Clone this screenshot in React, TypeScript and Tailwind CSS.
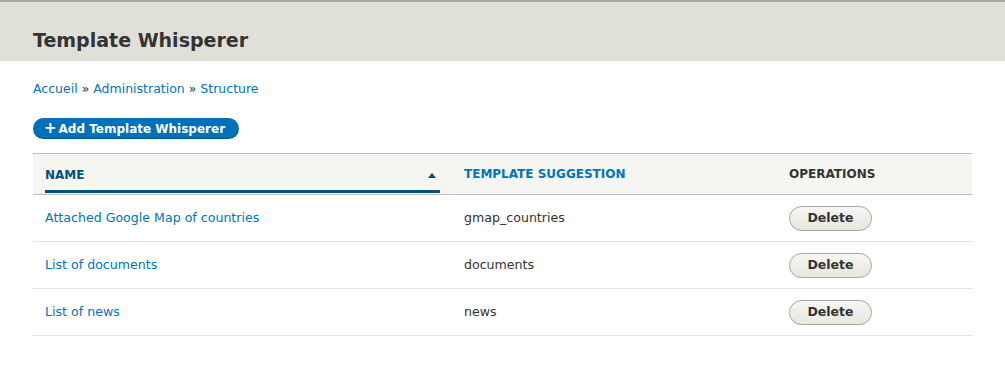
const rows = [
  { name: 'Attached Google Map of countries', suggestion: 'gmap_countries' },
  { name: 'List of documents', suggestion: 'documents' },
  { name: 'List of news', suggestion: 'news' },
];

export default function App() {
  return (
    <div className="min-h-[387px] bg-white font-['DejaVu_Sans',sans-serif] text-[#333]">
      <header className="border-t-2 border-[#a6a6a6] bg-[#e0e0d8] px-[33px] pb-[8px] pt-[26px]">
        <h1 className="text-[19px] font-bold leading-[25px] text-[#333]">Template Whisperer</h1>
      </header>

      <main className="px-[33px]">
        <nav className="mt-[20px] text-[12.5px] leading-[16px] text-[#0074bd]">
          <a href="#">Accueil</a> <span className="text-[#333]">»</span> <a href="#">Administration</a>{' '}
          <span className="text-[#333]">»</span> <a href="#">Structure</a>
        </nav>

        <button className="mt-[21px] flex h-[21px] items-center rounded-full bg-[#0071b8] pl-[11px] pr-[14px] text-[12px] font-bold text-white shadow-[inset_0_-1px_0_rgba(0,0,0,0.25)]">
          <span className="mr-[2px] text-[15px] leading-none">+</span>Add Template Whisperer
        </button>

        <table className="mt-[14px] w-[939px] border-collapse text-[12.6px]">
          <thead>
            <tr className="h-[41px] border-b border-t border-[#bfbfba] bg-[#f5f5f2] text-left text-[12px] font-bold uppercase">
              <th className="w-[419px] px-[12px] align-middle">
                <div className="relative flex h-[38px] items-center justify-between border-b-[3px] border-[#004f80] pt-[5px] text-[#004f80]">
                  <span>Name</span>
                  <svg width="8" height="5" viewBox="0 0 8 5" className="mr-[4px]">
                    <path d="M0 5 L4 0 L8 5 Z" fill="#004f80" />
                  </svg>
                </div>
              </th>
              <th className="w-[325px] px-[12px] text-[#0074bd]">Template suggestion</th>
              <th className="px-[12px] text-[#333]">Operations</th>
            </tr>
          </thead>
          <tbody>
            {rows.map((row) => (
              <tr key={row.name} className="h-[47px] border-b border-[#e6e4df]">
                <td className="px-[12px] text-[#0074bd]">
                  <a href="#">{row.name}</a>
                </td>
                <td className="px-[12px]">{row.suggestion}</td>
                <td className="px-[12px]">
                  <button className="h-[25px] w-[83px] rounded-full border border-[#a6a6a6] bg-gradient-to-b from-[#f6f6f3] to-[#e7e7df] text-[12.5px] font-bold text-[#333]">
                    Delete
                  </button>
                </td>
              </tr>
            ))}
          </tbody>
        </table>
      </main>
    </div>
  );
}
